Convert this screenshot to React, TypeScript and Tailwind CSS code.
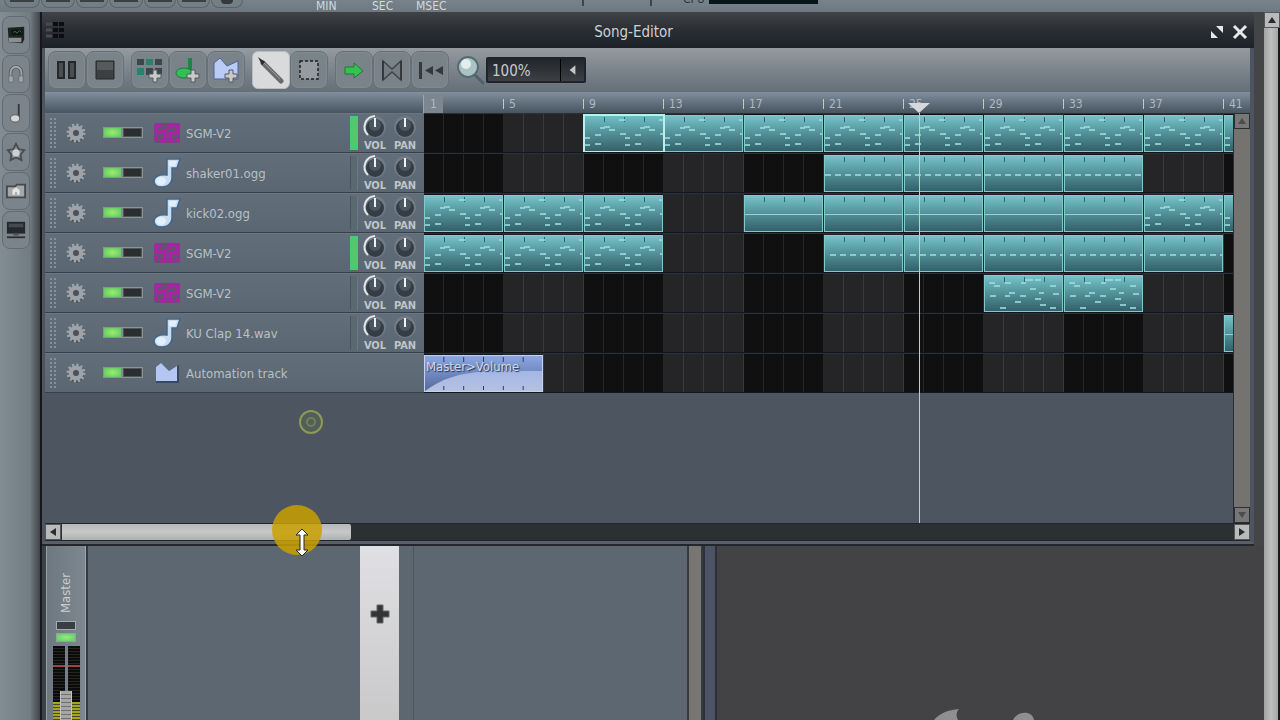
import type { ReactNode } from "react";

type ClipKind = "melody" | "dashes" | "offbeat" | "line" | "sparse" | "automation";
type Clip = { start: number; length: number; kind: ClipKind; selected?: boolean };
type Track = {
  name: string;
  icon: "plugin" | "sample" | "automation";
  active?: boolean;
  clips: Clip[];
};

const repeatClip = (from: number, to: number, kind: ClipKind): Clip[] => {
  const clips: Clip[] = [];
  for (let bar = from; bar <= to; bar += 4) {
    clips.push({ start: bar, length: 4, kind });
  }
  return clips;
};

const tracks: Track[] = [
  {
    name: "SGM-V2",
    icon: "plugin",
    active: true,
    clips: [
      { start: 9, length: 4, kind: "melody", selected: true },
      ...repeatClip(13, 41, "melody"),
    ],
  },
  { name: "shaker01.ogg", icon: "sample", clips: repeatClip(21, 33, "dashes") },
  {
    name: "kick02.ogg",
    icon: "sample",
    clips: [
      ...repeatClip(1, 9, "melody"),
      ...repeatClip(17, 33, "line"),
      ...repeatClip(37, 41, "melody"),
    ],
  },
  {
    name: "SGM-V2",
    icon: "plugin",
    active: true,
    clips: [...repeatClip(1, 9, "melody"), ...repeatClip(21, 37, "offbeat")],
  },
  { name: "SGM-V2", icon: "plugin", clips: repeatClip(29, 33, "sparse") },
  { name: "KU Clap 14.wav", icon: "sample", clips: repeatClip(41, 41, "line") },
  {
    name: "Automation track",
    icon: "automation",
    clips: [{ start: 1, length: 6, kind: "automation" }],
  },
];

// x, y, width of each note inside a four bar clip
const melodyNotes = [
  [0, 21, 5],
  [0, 28, 5],
  [10, 18, 6],
  [10, 27, 6],
  [15, 11, 5],
  [19, 10, 6],
  [24, 13, 6],
  [34, 3, 6],
  [35, 17, 6],
];
const sparseNotes = [
  [4, 6, 6],
  [9, 9, 6],
  [20, 6, 6],
  [5, 19, 6],
  [20, 19, 5],
  [24, 16, 6],
  [35, 19, 6],
  [30, 25, 6],
  [15, 31, 6],
  [0, 35, 6],
  [36, 6, 5],
  [40, 3, 8],
  [50, 3, 6],
  [45, 12, 6],
  [50, 22, 6],
  [55, 28, 6],
  [65, 31, 6],
  [65, 9, 6],
  [54, 16, 5],
  [68, 17, 6],
];

function notesFor(kind: ClipKind) {
  if (kind === "melody")
    return [...melodyNotes, ...melodyNotes.map(([x, y, w]) => [x + 40, y, w])];
  if (kind === "dashes") return Array.from({ length: 8 }, (_, i) => [i * 10, 18, 6]);
  if (kind === "offbeat") return Array.from({ length: 8 }, (_, i) => [i * 10 + 5, 18, 6]);
  if (kind === "line") return [[0, 18, 80]];
  return sparseNotes;
}

function ClipView({ clip }: { clip: Clip }) {
  const gridColumn = `${clip.start} / span ${clip.length}`;
  if (clip.kind === "automation") {
    return (
      <div
        style={{ gridColumn }}
        className="relative mr-px h-[37px] overflow-hidden border border-[#c6d0f0] bg-linear-to-b from-[#8ca6e0] to-[#556b9f]"
      >
        <svg viewBox="0 0 118 35" className="block h-full w-full" preserveAspectRatio="none">
          <defs>
            <linearGradient id="curve" x2="0" y2="1">
              <stop offset="0" stopColor="#a3b6e6" />
              <stop offset="1" stopColor="#b6c1df" />
            </linearGradient>
          </defs>
          <path d="M0 35C16 24 30 17 66 15H118V35Z" fill="url(#curve)" />
          <path
            d="M19 1v5M39 1v5M59 1v5M79 1v5M99 1v5M19 30v4M39 30v4M59 30v4M79 30v4M99 30v4"
            stroke="#2c3a66"
          />
        </svg>
        <span className="absolute top-[3px] left-px text-[13px] leading-4 whitespace-nowrap text-[#d2d8e6] [text-shadow:1px_1px_1px_#26314f]">
          Master&gt;Volume
        </span>
      </div>
    );
  }
  return (
    <div
      style={{ gridColumn }}
      className={
        clip.selected
          ? "z-10 -mt-px -mr-px -ml-px h-[39px] overflow-hidden border-2 border-[#bdeeee] bg-linear-to-b from-[#6fbfc5] to-[#376169]"
          : "mr-px h-[37px] overflow-hidden border border-[#80cace] bg-linear-to-b from-[#75c3c8] to-[#32616a]"
      }
    >
      <svg width="78" height="36" viewBox="0 0 78 36" className="block">
        <path d="M19.5 1v5M39.5 1v5M59.5 1v5" stroke="#2c666e" />
        {notesFor(clip.kind).map(([x, y, w], i) => (
          <rect
            key={i}
            x={x}
            y={y}
            width={w}
            height={clip.kind === "line" ? 1 : 2}
            fill="#9addde"
            opacity={clip.kind === "line" ? 0.9 : 0.8}
          />
        ))}
      </svg>
    </div>
  );
}

function NoteIcon() {
  return (
    <svg viewBox="0 0 28 30" className="h-[30px] w-7">
      <path
        d="M14 1H27L24 10H19V20C19 26 14 29 9 29 4 29 1 27 1 23 1 19 6 16 14 17Z"
        fill="#c8dcf2"
        stroke="#42688d"
        strokeWidth="1.5"
      />
      <ellipse cx="8" cy="23" rx="5" ry="4" fill="#e6f0fa" />
      <path d="M16 3h8l-2 5h-6z" fill="#e3effb" />
    </svg>
  );
}

function PluginIcon() {
  return (
    <svg viewBox="0 0 28 22" className="h-[22px] w-7">
      <rect x="1" y="1" width="26" height="20" rx="2" fill="#67506f" />
      <path
        d="M12 10H3V3H9M12 7V19H7M3 14V19M16 7V3H25V11H17V19H21M25 15V20"
        fill="none"
        stroke="#b11eab"
        strokeWidth="3"
      />
    </svg>
  );
}

function AutomationIcon() {
  return (
    <svg viewBox="0 0 28 24" className="h-6 w-7">
      <path d="M3 22V6L8 2 16 10 26 4V22Z" fill="#354964" />
      <path d="M3 20V6L8 2 16 10 24 5V20Z" fill="#b3c7f2" />
    </svg>
  );
}

function Gear() {
  return (
    <svg viewBox="0 0 24 24" className="h-6 w-6">
      <circle cx="12" cy="14" r="8" fill="#3d464e" opacity=".4" />
      <circle
        cx="12"
        cy="12"
        r="8"
        fill="none"
        stroke="#a0a5a8"
        strokeWidth="3"
        strokeDasharray="2 2.2"
      />
      <circle cx="12" cy="12" r="5" fill="none" stroke="#9da3a6" strokeWidth="5" />
      <circle cx="12" cy="12" r="3" fill="#4c5257" />
    </svg>
  );
}

function Knob({ label, arc }: { label: string; arc?: boolean }) {
  return (
    <button className="flex w-[30px] flex-col items-center" aria-label={label}>
      <svg viewBox="0 0 28 28" className="h-7 w-7">
        <circle cx="14" cy="14" r="11" fill="#717b84" />
        <circle cx="14" cy="15" r="9" fill="#343d46" />
        <circle cx="14" cy="12" r="6" fill="#4b5660" />
        {arc && (
          <path d="M7 22A11 11 0 0 1 14 3" fill="none" stroke="#e1e6e8" strokeWidth="2" />
        )}
        <path d="M14 5v9" stroke="#eef1f2" strokeWidth="2" />
      </svg>
      <span className="text-[11px] leading-[10px] font-bold text-[#bfc5ca]">{label}</span>
    </button>
  );
}

function TrackRow({ track }: { track: Track }) {
  return (
    <div className="flex h-10">
      <div className="flex w-[379px] shrink-0 items-center border-b border-[#35404b] bg-linear-to-b from-[#626e79] to-[#5a6671] shadow-[inset_0_1px_0_#6b7681]">
        <div className="ml-1 h-8 w-2 bg-[radial-gradient(#85929c_1px,transparent_1px)] bg-size-[4px_4px]" />
        <button className="ml-[7px] h-6 w-6" aria-label="Track settings">
          <Gear />
        </button>
        <div className="ml-[15px] flex h-[11px] w-10 gap-0.5 border border-[#8d9296] bg-[#858b8d]">
          <input
            type="checkbox"
            defaultChecked
            aria-label="Enabled"
            className="h-[9px] flex-1 appearance-none bg-[radial-gradient(#a0ea6c,#5ac568)]"
          />
          <input
            type="checkbox"
            aria-label="Solo"
            className="h-[9px] flex-1 appearance-none border border-[#505556] bg-[#292e31]"
          />
        </div>
        <div className="ml-2.5 flex w-7 items-center">
          {track.icon === "plugin" && <PluginIcon />}
          {track.icon === "sample" && <NoteIcon />}
          {track.icon === "automation" && <AutomationIcon />}
        </div>
        <button className="ml-[5px] flex-1 pt-0.5 text-left text-[13px] whitespace-nowrap text-[#b9c0c6]">
          {track.name}
        </button>
        {track.icon !== "automation" && (
          <>
            <div
              className={
                track.active
                  ? "h-[34px] w-2 bg-[#4fc971]"
                  : "h-[34px] w-2 border-x border-l-[#48545e] border-r-[#6c7881] bg-[#5a6970]"
              }
            />
            <div className="mr-1 ml-0.5 flex self-start">
              <Knob label="VOL" arc />
              <Knob label="PAN" />
            </div>
          </>
        )}
      </div>
      <div className="grid min-w-0 flex-1 grid-cols-[repeat(44,20px)] overflow-hidden border-b border-[#10171c] bg-[repeating-linear-gradient(90deg,#ffffff00_0,#ffffff00_19px,#ffffff18_19px,#ffffff18_20px),repeating-linear-gradient(90deg,#101010_0,#101010_80px,#252527_80px,#252527_160px)] pt-0.5 shadow-[inset_0_1px_0_#2c2f33]">
        {track.clips.map((clip) => (
          <ClipView key={clip.start} clip={clip} />
        ))}
      </div>
    </div>
  );
}

function ToolButton({
  label,
  active,
  children,
}: {
  label: string;
  active?: boolean;
  children: ReactNode;
}) {
  return (
    <button
      aria-label={label}
      className={
        active
          ? "flex h-[38px] w-[38px] items-center justify-center rounded-md border border-[#b9bcbf] bg-[#d9dadc]"
          : "flex h-[38px] w-[38px] items-center justify-center rounded-lg border border-[#67717a] bg-[#7a838a] shadow-[inset_0_0_2px_#949ca2]"
      }
    >
      <svg viewBox="0 0 28 28" className="h-7 w-7">
        {children}
      </svg>
    </button>
  );
}

const plusPath = "M17 14h4v4h4v4h-4v4h-4v-4h-4v-4h4z";

function Toolbar() {
  return (
    <div className="flex h-11 items-center gap-[7px] bg-linear-to-b from-[#949aa0] to-[#646f78] pl-[3px]">
      <div className="flex">
        <ToolButton label="Pause">
          <path d="M5 6h6v16H5zM16 6h6v16h-6z" fill="#4a4e51" stroke="#25282a" strokeWidth="2" />
        </ToolButton>
        <ToolButton label="Stop">
          <path d="M5 5h18v18H5z" fill="#3c4043" stroke="#27292b" />
          <path d="M6 6h16v8H6z" fill="#565a5d" />
        </ToolButton>
      </div>
      <div className="flex">
        <ToolButton label="Add beat/bassline">
          <path d="M1 3h7v6H1zM19 3h7v6h-7zM10 12h7v7h-7zM19 12h7v6h-7z" fill="#3b474b" />
          <path d="M10 3h7v6h-7zM1 12h7v7H1z" fill="#2b816f" />
          <path d={plusPath} fill="#c9c9ca" stroke="#555a5d" />
        </ToolButton>
        <ToolButton label="Add sample track">
          <path d="M14 2h4v16h-4z" fill="#218344" />
          <ellipse cx="10" cy="17" rx="8" ry="5" fill="#2fc159" stroke="#23773a" />
          <path d={plusPath} fill="#c9c9ca" stroke="#555a5d" />
        </ToolButton>
        <ToolButton label="Add automation track">
          <path d="M2 23V7L8 2 15 10 26 5V23Z" fill="#b9cbf7" stroke="#51628d" />
          <path d={plusPath} fill="#c9c9ca" stroke="#555a5d" />
        </ToolButton>
      </div>
      <div className="flex">
        <ToolButton label="Draw mode" active>
          <path d="M6 7L24 25" stroke="#686a6b" strokeWidth="5" strokeLinecap="round" />
          <path d="M1 1l7 5-3 3z" fill="#282a2b" />
          <path d="M7 7L23 23" stroke="#98999a" />
        </ToolButton>
        <ToolButton label="Edit mode">
          <path
            d="M5 5h18v18H5z"
            fill="#959b9f"
            stroke="#1f2224"
            strokeWidth="1.5"
            strokeDasharray="3 2"
          />
        </ToolButton>
      </div>
      <div className="flex">
        <ToolButton label="Autoscroll">
          <path d="M5 11h9V7l9 8-9 7v-4H5z" fill="#35c24e" stroke="#23763a" />
        </ToolButton>
        <ToolButton label="Loop points">
          <path d="M5 5l9 8 9-8v19l-9-8-9 8z" fill="#747c82" stroke="#3f4549" strokeWidth="1.5" />
          <path d="M5 5v19M23 5v19" stroke="#33383b" strokeWidth="2" />
        </ToolButton>
        <ToolButton label="Back to zero">
          <path d="M3 6h3v17H3zM17 10v9l-8-4.5zM27 10v9l-8-4.5z" fill="#34393c" />
        </ToolButton>
      </div>
      <div className="flex items-center">
        <svg viewBox="0 0 30 30" className="h-[30px] w-[30px]">
          <path d="M19 20l8 8" stroke="#51606a" strokeWidth="3" strokeLinecap="round" />
          <circle cx="12" cy="12" r="10" fill="#a9c3c7" stroke="#596a71" strokeWidth="2" />
          <circle cx="10" cy="9" r="5" fill="#e2eeee" />
        </svg>
        <div className="relative h-[26px] w-[100px] rounded-xs border-2 border-[#20242a] bg-linear-to-b from-[#22262a] to-[#3d4145]">
          <select
            aria-label="Zoom"
            className="h-full w-full appearance-none bg-transparent pl-1 text-[15px] leading-5 text-[#c9cbcd] outline-none"
          >
            <option>100%</option>
          </select>
          <svg
            viewBox="0 0 24 22"
            className="pointer-events-none absolute top-0 right-0 h-[22px] w-6 border-l border-black"
          >
            <path d="M15 6v10l-6-5z" fill="#c4c6c8" />
          </svg>
        </div>
      </div>
    </div>
  );
}

function TimeRuler() {
  return (
    <div className="flex h-[21px] bg-linear-to-b from-[#80909c] to-[#485561]">
      <div className="w-[378px] shrink-0" />
      <div className="flex min-w-0 flex-1 overflow-hidden pt-0.5">
        {Array.from({ length: 11 }, (_, i) => (
          <div key={i} className="flex w-20 shrink-0 items-center text-[12px] text-[#aeb8c0]">
            {i === 0 ? (
              <span className="flex h-[18px] w-5 items-center justify-center border-l border-[#9ba5ac] bg-[#7b8690]">
                1
              </span>
            ) : (
              <span className="flex h-2.5 items-center border-l border-[#c2cad0] pl-[5px]">
                {i * 4 + 1}
              </span>
            )}
          </div>
        ))}
      </div>
    </div>
  );
}

function ScrollArrow({ d, dim, label }: { d: string; dim?: boolean; label: string }) {
  return (
    <button
      aria-label={label}
      className={
        dim
          ? "h-4 w-4 shrink-0 border border-[#2c2f31] bg-[#777777]"
          : "h-4 w-4 shrink-0 border border-[#55585a] bg-[#b9babb]"
      }
    >
      <svg viewBox="0 0 14 14" className="h-full w-full">
        <path d={d} fill={dim ? "#4d4d4d" : "#2a2c2e"} />
      </svg>
    </button>
  );
}

function SongEditor() {
  return (
    <section className="mr-2.5 flex h-[534px] flex-col border-b-2 border-[#22262d] bg-[#1c2027]">
      <header className="flex h-9 shrink-0 items-center bg-linear-to-b from-[#414346] via-[#2a2e33] to-[#1d2129] pr-[5px] pl-1">
        <svg viewBox="0 0 22 18" className="h-[18px] w-[22px]">
          <path d="M0 3h6M0 9h6M0 15h6" stroke="#484c51" strokeWidth="3" />
          <path
            d="M7 1h5v4H7zM13 1h5v4h-5zM7 7h5v4H7zM13 7h5v4h-5zM7 13h5v4H7zM13 13h5v4h-5z"
            fill="#0c0e10"
          />
        </svg>
        <h1 className="mr-2.5 flex-1 pt-1 text-center text-[15px] text-[#cfd1d3]">Song-Editor</h1>
        <button aria-label="Restore" className="mt-1 h-4 w-4">
          <svg viewBox="0 0 16 16">
            <path d="M7 2h7v7zM2 7v7h7z" fill="#e6e7e9" />
          </svg>
        </button>
        <button aria-label="Close" className="mt-1 ml-1.5 h-[18px] w-[18px]">
          <svg viewBox="0 0 18 18">
            <path d="M3 3l12 12M15 3L3 15" stroke="#e8e9eb" strokeWidth="3" />
          </svg>
        </button>
      </header>
      <div className="flex min-h-0 flex-1 flex-col border-r-4 border-b-3 border-l-3 border-r-[#4d5361] border-b-[#5b5f68] border-l-[#4d555d]">
        <Toolbar />
        <TimeRuler />
        <div className="flex min-h-0 flex-1">
          <div className="relative flex min-w-0 flex-1 flex-col bg-[#4d5561]">
            {tracks.map((track, i) => (
              <TrackRow key={i} track={track} />
            ))}
            {/* playhead */}
            <div className="pointer-events-none absolute -top-2.5 bottom-0 left-[863px] z-20 flex w-[22px] flex-col items-center">
              <svg viewBox="0 0 22 10" className="h-2.5 w-[22px] shrink-0">
                <path d="M0 0h22L11 10z" fill="#d5d9dc" />
              </svg>
              <div className="w-px flex-1 bg-[#c4cccf]" />
            </div>
          </div>
          <div className="flex w-[17px] flex-col border-l border-[#2b2d30] bg-[#75736f]">
            <ScrollArrow d="M7 4l4 6H3z" dim label="Scroll up" />
            <div className="flex-1" />
            <ScrollArrow d="M7 10L3 4h8z" dim label="Scroll down" />
          </div>
        </div>
        <div className="flex h-[18px] shrink-0 items-center border-t border-b border-[#20262c] bg-[#2d3033]">
          <ScrollArrow d="M4 7l6-4v8z" label="Scroll left" />
          <div className="ml-px h-4 w-[289px] rounded-r-xs bg-linear-to-b from-[#b5b8b8] via-[#c7c9c9] to-[#aeb1b1]" />
          <div className="flex-1" />
          <ScrollArrow d="M10 7L4 3v8z" label="Scroll right" />
        </div>
      </div>
    </section>
  );
}

function LevelMeter() {
  return (
    <div className="flex w-3 flex-col bg-[repeating-linear-gradient(#0a0b0c_0,#0a0b0c_2px,#27231f_2px,#27231f_3px)]">
      <div className="mt-[19px] h-0.5 bg-[#a93e47]" />
      <div className="flex-1" />
      <div className="h-[18px] bg-[repeating-linear-gradient(#a5a524_0,#a5a524_2px,#45491c_2px,#45491c_3px)]" />
    </div>
  );
}

function Mixer() {
  return (
    <section className="flex min-h-0 flex-1 bg-[#434345]">
      <div className="w-1 bg-[#3b4149]" />
      <div className="flex w-10 flex-col items-center overflow-hidden border-x border-l-[#99a1a7] border-r-[#9da5ab] bg-linear-to-r from-[#6e7881] to-[#7c8790]">
        <span className="mt-[23px] h-11 rotate-180 text-[13px] leading-4 text-[#c9ced2] [writing-mode:vertical-rl]">
          Master
        </span>
        <div className="mt-2 h-[9px] w-5 border border-[#a6abae] bg-[#383e43]" />
        <input
          type="checkbox"
          defaultChecked
          aria-label="Master enabled"
          className="mt-[3px] h-[9px] w-5 appearance-none border border-[#8ea893] bg-[radial-gradient(#92ed7c,#5fcb6a)]"
        />
        <div className="relative mt-1 flex w-[27px] flex-1 justify-between">
          <LevelMeter />
          <LevelMeter />
          <input
            type="range"
            aria-label="Master volume"
            className="absolute inset-x-0 bottom-0 h-[30px] opacity-0"
          />
          <div className="pointer-events-none absolute bottom-0 left-[7px] h-[29px] w-3 border-x border-[#c4c4c4] bg-[repeating-linear-gradient(#a6a6a6_0,#a6a6a6_3px,#707070_3px,#707070_4px)]" />
        </div>
      </div>
      <div className="w-[274px] border-l-2 border-[#323b45] bg-[#5d6771]" />
      <button
        aria-label="Add mixer channel"
        className="flex w-[39px] justify-center bg-linear-to-b from-[#e0e0e4] to-[#c9c9ca] pt-[58px]"
      >
        <svg viewBox="0 0 20 20" className="h-5 w-5">
          <path d="M7 1h6v6h6v6h-6v6H7v-6H1V7h6z" fill="#333536" stroke="#656769" />
        </svg>
      </button>
      <div className="w-[15px] border-r border-[#48545e] bg-[#5c6770]" />
      <div className="w-[273px] bg-[#5d6771]" />
      <div className="w-4 border-x-2 border-[#353a3d] bg-[#777672]" />
      <div className="w-3.5 border-x-2 border-[#2b3039] bg-[#4b5364]" />
      <div className="flex flex-1 items-end">
        <svg viewBox="0 0 110 12" className="ml-[213px] h-3 w-[110px]">
          <path d="M4 12C10 5 18 2 29 1 26 4 26 8 28 12Z" fill="#8f8f90" />
          <path d="M83 12C86 4 102 1 104 12Z" fill="#8f8f90" />
        </svg>
      </div>
    </section>
  );
}

const sideTabs: { label: string; icon: ReactNode }[] = [
  {
    label: "My instruments",
    icon: (
      <>
        <path d="M2 3L20 2V16L18 20 3 19Z" fill="#1d2222" />
        <path d="M6 5h12v6H6z" fill="#0c1511" />
        <path d="M8 8l2-1 2 2 3-3 2 2" stroke="#318650" fill="none" />
        <path d="M3 14h14v5H3z" fill="#8a8f92" />
      </>
    ),
  },
  {
    label: "My samples",
    icon: (
      <>
        <path d="M5 15V10A6 7 0 0 1 17 10V15" fill="none" stroke="#555b5f" strokeWidth="4" />
        <path d="M5 15V10A6 7 0 0 1 17 10V15" fill="none" stroke="#a1a7ab" strokeWidth="2" />
        <path d="M3 13h5v7H3zM14 13h5v7h-5z" fill="#a0a6aa" stroke="#666d72" />
      </>
    ),
  },
  {
    label: "My presets",
    icon: (
      <>
        <path d="M14 1v16" stroke="#34383b" strokeWidth="2" />
        <ellipse cx="10" cy="17" rx="5" ry="4" fill="#d4d7d9" stroke="#53585b" />
      </>
    ),
  },
  {
    label: "My projects",
    icon: (
      <>
        <path
          d="M11 2l3 6 6 1-4 5 1 6-6-3-6 3 1-6-4-5 6-1z"
          fill="#858b90"
          stroke="#484d51"
          strokeWidth="2"
        />
        <circle cx="11" cy="12" r="4" fill="#cdd0d2" />
      </>
    ),
  },
  {
    label: "Home folder",
    icon: (
      <>
        <path d="M1 6h9l2-2h9v14H1z" fill="#a3a8ac" stroke="#45494c" strokeWidth="2" />
        <path d="M7 15v-5l4-3 4 3v5h-3v-3h-2v3z" fill="#e2e4e5" />
      </>
    ),
  },
  {
    label: "My computer",
    icon: (
      <>
        <path d="M1 2h20v13H1z" fill="#24282b" />
        <path d="M3 4h16v4H3z" fill="#454a4e" />
        <path d="M8 15h6v2H8z" fill="#4c5154" />
        <path d="M1 19h20" stroke="#2d3134" strokeWidth="2" />
      </>
    ),
  },
];

export default function App() {
  return (
    <div className="relative flex h-screen flex-col overflow-hidden bg-[#434547] font-['DejaVu_Sans_Condensed','DejaVu_Sans','Noto_Sans',sans-serif]">
      <div className="flex h-3 shrink-0 items-end bg-linear-to-b from-[#77838c] to-[#6d7780]">
        <div className="flex w-[316px] gap-px self-start pl-1">
          {[36, 34, 32, 34, 32, 33, 32].map((w, i) => (
            <div
              key={i}
              style={{ width: w }}
              className="flex h-2 justify-center rounded-b-lg border-x border-b border-[#59636a] bg-[#737e85]"
            >
              {i === 6 ? (
                <div className="h-1 w-3 rounded-b-full bg-[#33393d]" />
              ) : (
                <div className="h-0.5 w-6 bg-[#3a4145]" />
              )}
            </div>
          ))}
        </div>
        <div className="flex text-[12px] leading-3 text-[#d3d8db]">
          <span className="w-14">MIN</span>
          <span className="w-11">SEC</span>
          <span className="w-[166px]">MSEC</span>
        </div>
        <div className="h-1.5 w-[70px] self-start border-x-2 border-[#3d444a]" />
        <div className="flex self-start pl-[31px]">
          <span className="-mt-[7px] w-[26px] text-[12px] leading-3 text-[#2f363b]">CPU</span>
          <div className="h-1 w-[109px] bg-[#071418]" />
        </div>
      </div>
      <div className="flex min-h-0 flex-1">
        <nav className="flex w-[42px] shrink-0 flex-col gap-px border-r-2 border-[#15171d] bg-linear-to-r from-[#828d93] via-[#727c83] via-75% to-[#41444b] pt-1 pl-0.5">
          {sideTabs.map((tab) => (
            <button
              key={tab.label}
              aria-label={tab.label}
              className="flex h-[38px] w-7 items-center justify-center rounded-lg border border-[#626b71] bg-[#7b848a]"
            >
              <svg viewBox="0 0 22 22" className="h-5 w-5">
                {tab.icon}
              </svg>
            </button>
          ))}
        </nav>
        <main className="flex min-w-0 flex-1 flex-col">
          <SongEditor />
          <Mixer />
        </main>
        <div className="flex w-4 flex-col border-r-2 border-[#17191b] bg-linear-to-r from-[#a2a3a4] via-[#bebfbf] to-[#a5a6a6]">
          <ScrollArrow d="M7 4l4 6H3z" label="Scroll workspace up" />
        </div>
      </div>

      {/* click ring, pointer halo and resize pointer */}
      <svg viewBox="0 0 26 26" className="absolute top-[409px] left-[298px] z-30 h-[26px] w-[26px]">
        <circle cx="13" cy="13" r="11" fill="#525e58" stroke="#8c9a56" strokeWidth="2" />
        <circle cx="13" cy="13" r="4" fill="none" stroke="#71805a" strokeWidth="2" />
      </svg>
      <svg viewBox="0 0 50 54" className="absolute top-[505px] left-[272px] z-30 h-[54px] w-[50px]">
        <circle cx="25" cy="25" r="25" fill="#c9a000" opacity=".85" />
        <path
          d="M30 24l6 6h-4v15h4l-6 6-6-6h4V30h-4z"
          fill="#fff"
          stroke="#252525"
          strokeWidth="1"
        />
      </svg>
    </div>
  );
}
